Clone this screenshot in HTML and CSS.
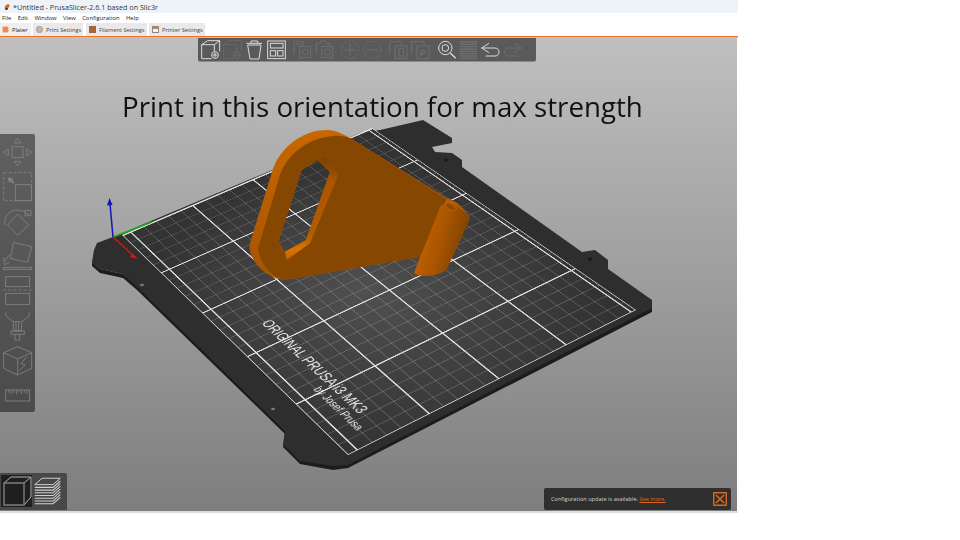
FILE: index.html
```html
<!DOCTYPE html>
<html lang="en">
<head>
<meta charset="utf-8">
<title>PrusaSlicer</title>
<link rel="stylesheet" href="styles.css">
</head>
<body>
<div class="window">
  <header class="titlebar">
    <svg class="app-icon" viewBox="0 0 8 8"><path d="M2 7 C1 5 2 2 5 1 C7 1 7 4 5 5 L4 7 Z" fill="#e0661c"/><path d="M3 7 L3 5 L5 5 L4 7 Z" fill="#222"/></svg>
    <span>*Untitled - PrusaSlicer-2.6.1 based on Slic3r</span>
  </header>
  <nav class="menubar">
    <span>File</span><span>Edit</span><span>Window</span><span>View</span><span>Configuration</span><span>Help</span>
  </nav>
  <div class="tabs">
    <div class="tab tab-active"><i class="tab-ico ico-plater"></i>Plater</div>
    <div class="tab"><i class="tab-ico ico-print"></i>Print Settings</div>
    <div class="tab"><i class="tab-ico ico-filament"></i>Filament Settings</div>
    <div class="tab"><i class="tab-ico ico-printer"></i>Printer Settings</div>
  </div>
  <div class="accent-line"></div>
  <main class="viewport">
    <div class="scene">
      <svg class="plate-body" viewBox="0 0 737 549">
        <path class="plate-side" d="M92 262 L92 266 L100 273 L123 278 L137 290 L285 434 L283 447 L300 464 L333 470 L348 468 L652 312 L652 305 L348 462 L300 458 L285 430 L137 286 L123 274 L100 269 Z"/>
        <path class="plate-top" d="M113 237 L97 243 L94 250 L92 262 L100 269 L123 274 L137 287 L285 430 L283 444 L300 461 L333 466 L348 465 L652 308 L652 300 L608 269 L608 260 L595 250 L582 252 L462 167 L462 160 L452 153 L435 152 L432 147 L452 143 L452 138 L423 120 L380 130 L360 133 Z"/>
        <circle class="hole" cx="446" cy="160" r="1.6"/>
        <circle class="hole" cx="590" cy="259" r="1.8"/>
        <ellipse class="hole-light" cx="273" cy="409" rx="2" ry="1.3"/>
        <ellipse class="hole-light" cx="142" cy="285" rx="2" ry="1.3"/>
      </svg>
      <div class="plate">
        <span class="plate-name">ORIGINAL PRUSA i3 MK3</span>
        <span class="plate-sub">by Josef Prusa</span>
      </div>
      <svg class="axes" viewBox="0 0 737 549">
        <path class="axis-green" d="M113 237 L152 222"/>
        <path class="axis-red" d="M113 237 L135 257"/>
        <path class="head-red" d="M132 253 L138 259 L130 257 Z"/>
        <path class="axis-blue" d="M113 237 L110 204"/>
        <path class="head-blue" d="M109.500 198 L112.500 205 L107 205.500 Z"/>
      </svg>
      <svg class="part" viewBox="0 0 750 510">
        <defs>
          <linearGradient id="rimFill" x1="0" y1="0" x2="0" y2="1">
            <stop offset="0" stop-color="#c96700"/>
            <stop offset="1" stop-color="#a55400"/>
          </linearGradient>
          <linearGradient id="wallFill" x1="0" y1="0" x2="0" y2="1">
            <stop offset="0" stop-color="#7a4100"/>
            <stop offset=".25" stop-color="#ab5700"/>
            <stop offset=".75" stop-color="#b35b00"/>
            <stop offset=".9" stop-color="#d97400"/>
            <stop offset="1" stop-color="#bd6000"/>
          </linearGradient>
          <linearGradient id="cylFill" x1="0" y1="0" x2="1" y2=".35">
            <stop offset="0" stop-color="#a85400"/>
            <stop offset=".3" stop-color="#bd5f00"/>
            <stop offset=".6" stop-color="#a85400"/>
            <stop offset="1" stop-color="#7c4200"/>
          </linearGradient>
        </defs>
        <path class="part-rim" fill-rule="evenodd" d="M58 375 L128 150 C150 85 215 30 290 30 C320 30 345 45 370 60 L650 235 C680 240 705 270 720 295 L650 447 C635 465 575 475 552 460 L570 410 L165 480 C110 475 60 430 58 375 Z M215 150 L262 120 L300 155 L228 360 L165 395 L145 365 Z"/>
        <path class="part-face" fill-rule="evenodd" d="M84 385 L150 165 C172 100 240 52 310 48 C330 46 350 50 370 60 L650 238 L570 410 L165 480 C125 474 88 430 84 385 Z M215 150 L262 120 L300 155 L228 360 L165 395 L145 365 Z"/>
        <path class="part-wall" d="M262 120 L285 112 L325 165 L240 370 L170 420 L165 395 L228 360 L300 155 Z"/>
        <path class="part-cyl" d="M630 262 C642 240 690 250 720 295 L650 447 C635 465 575 475 552 460 Z"/>
        <ellipse class="part-cap" cx="662" cy="260" rx="18" ry="9" transform="rotate(30 662 260)"/>
      </svg>
    </div>

    <h1 class="headline">Print in this orientation for max strength</h1>

    <div class="top-toolbar">
      <svg class="tool on" viewBox="18 28 57 57"><path d="M20 42 L38 30 L74 30 L74 62 M20 42 L58 42 L58 62 M58 42 L74 30 M20 42 L20 84 L50 84"/><circle cx="60" cy="73" r="10"/><path d="M60 66 V80 M53 73 H67"/></svg>
      <svg class="tool off" viewBox="85 28 57 57"><path class="dash" d="M87 42 L105 30 L140 30 L140 62 M87 42 L125 42 L125 62 M87 42 L87 84 L115 84"/><circle cx="127" cy="73" r="10"/><path d="M120 73 H134"/></svg>
      <svg class="tool on" viewBox="150 28 57 57"><path d="M154 38 H201 M168 38 V31 H188 V38 M158 43 L165 85 H192 L198 43 Z"/></svg>
      <svg class="tool on" viewBox="215 28 57 57"><rect x="217" y="31" width="53" height="53"/><rect x="225" y="38" width="38" height="14"/><rect x="225" y="60" width="16" height="16"/><rect x="247" y="60" width="16" height="16"/></svg>
      <svg class="tool off sep" viewBox="295 28 57 57"><path d="M298 70 V33 H325 V45 M303 40 H318"/><rect x="315" y="47" width="33" height="34"/><circle cx="332" cy="64" r="9"/></svg>
      <svg class="tool off" viewBox="360 28 57 57"><path d="M364 70 V38 H378 V31 H392 V38 H405 V45"/><rect x="380" y="47" width="33" height="34"/><circle cx="397" cy="64" r="9"/></svg>
      <svg class="tool off sep" viewBox="445 28 57 57"><circle class="dash" cx="472" cy="58" r="26"/><path d="M472 40 V76 M454 58 H490"/></svg>
      <svg class="tool off" viewBox="508 28 57 57"><circle class="dash" cx="536" cy="58" r="26"/><path d="M518 58 H554"/></svg>
      <svg class="tool off sep" viewBox="585 28 57 57"><path d="M587 70 V33 H624 V45"/><rect x="603" y="46" width="36" height="38"/><rect x="615" y="54" width="13" height="22"/></svg>
      <svg class="tool off" viewBox="650 28 57 57"><path d="M652 70 V33 H689 V45"/><rect x="668" y="46" width="36" height="38"/><text class="tool-letter" x="686" y="76">P</text></svg>
      <svg class="tool on sep" viewBox="730 28 57 57"><circle cx="755" cy="52" r="20"/><circle cx="755" cy="52" r="10"/><path class="thick" d="M770 67 L786 83"/></svg>
      <svg class="tool off" viewBox="812 28 57 57"><path class="thick" d="M814 34 H866 M814 41 H866 M814 48 H866 M814 55 H866 M814 62 H866 M814 69 H866 M814 76 H866 M814 83 H866"/></svg>
      <svg class="tool on" viewBox="892 28 57 57"><path d="M916 38 L894 52 L916 66 M894 52 H934 C950 52 950 76 934 76 H906"/></svg>
      <svg class="tool off" viewBox="960 28 57 57"><path d="M994 38 L1015 52 L994 66 M1015 52 H976 C960 52 960 76 976 76 H1005"/></svg>
    </div>

    <div class="left-toolbar">
      <svg class="gizmo" viewBox="3 21 90 90"><path d="M40 39 L50 25 L60 39 Z M22 57 L8 67 L22 77 Z M77 57 L92 67 L77 77 Z M40 94 L50 108 L60 94 Z"/><rect x="33" y="50" width="33" height="33"/></svg>
      <svg class="gizmo" viewBox="3 126 90 90"><rect class="dash-long" x="8" y="128" width="84" height="84"/><rect x="43" y="164" width="48" height="48"/><path class="fill" d="M19 141 L38 146 L33 150 L40 157 L36 161 L29 154 L25 159 Z"/></svg>
      <svg class="gizmo" viewBox="3 231 90 90"><path d="M12 285 C5 250 45 222 85 255 M72 240 L72 257 L90 257 L90 242 Z"/><path d="M50 252 L83 285 L50 316 L20 285 Z"/></svg>
      <svg class="gizmo" viewBox="3 336 90 90"><path d="M38 337 L92 350 L80 397 L28 385 Z M25 375 L12 393 M8 382 L11 404 L25 398"/><rect x="7" y="412" width="85" height="6"/></svg>
      <svg class="gizmo" viewBox="3 21 90 90"><rect x="14" y="20" width="72" height="30"/><path class="dash-long" d="M7 60 H92"/><rect x="14" y="70" width="72" height="33"/></svg>
      <svg class="gizmo" viewBox="3 121 90 90"><path d="M13 122 L16 135 L37 150 M86 122 L83 135 L62 150 M37 150 H62 V178 H37 Z M45 150 V178 M53 150 V178 M30 178 H70 V188 H30 Z M42 188 V205 H56 V188"/></svg>
      <svg class="gizmo" viewBox="3 226 90 90"><path d="M50 225 L92 243 L92 290 L50 310 L8 290 L8 243 Z M8 243 L50 262 L92 243 M50 262 V310 M78 255 L60 275 L72 280 L55 297"/></svg>
      <svg class="gizmo" viewBox="3 331 90 90"><rect x="14" y="355" width="72" height="33"/><path d="M22 355 V364 M30 355 V368 M38 355 V364 M46 355 V368 M54 355 V364 M62 355 V368 M70 355 V364 M78 355 V368"/></svg>
    </div>

    <div class="view-switch">
      <div class="view-btn view-active">
        <svg class="view-ico" viewBox="0 0 31 32"><path class="cube-back" d="M3 8 L10 2 L30 2 L30 22 L23 30 M23 8 L30 2"/><path class="cube-front" d="M3 8 H23 V30 H3 Z"/></svg>
      </div>
      <div class="view-btn">
        <svg class="view-ico" viewBox="0 0 34 32"><path class="stack-top" d="M2 9 L10 2 L30 2 L22 9 Z"/><path class="stack" d="M2 12 H22 L30 5 M2 15 H22 L30 8 M2 18 H22 L30 11 M2 21 H22 L30 14 M2 24 H22 L30 17 M2 27 H22 L30 20 M2 30 H22 L30 23"/></svg>
      </div>
    </div>

    <div class="notice">
      <span class="notice-text">Configuration update is available. <a class="notice-link">See more.</a></span>
      <svg class="notice-close" viewBox="0 0 14 14"><rect x=".6" y=".6" width="12.800" height="12.800" rx="1"/><path d="M3 3 L11 11 M11 3 L3 11"/></svg>
    </div>
  </main>
  <div class="bottom-line"></div>
</div>
</body>
</html>
```
FILE: styles.css
```css
* { box-sizing: border-box; }
html, body { margin: 0; padding: 0; background: #fff; }
body { font-family: "Open Sans", "Liberation Sans", sans-serif; color: #222; overflow: hidden; }

.window { width: 738px; height: 513px; display: flex; flex-direction: column; }

.titlebar { height: 13px; background: #eef3fa; display: flex; align-items: center; padding-left: 3px; gap: 2px; font-size: 7.200px; color: #333; }
.app-icon { width: 8px; height: 8px; }

.menubar { height: 10px; background: #fff; display: flex; align-items: center; padding-left: 2px; gap: 6.300px; font-size: 5.900px; color: #222; }

.tabs { height: 13px; display: flex; gap: 2px; background: #fff; }
.tab { width: 50px; height: 13px; background: #e9e9e9; display: flex; align-items: center; padding-left: 3px; gap: 3px; font-size: 5.700px; color: #444; white-space: nowrap; }
.tab:nth-child(3) { width: 61px; margin-left: 1px; }
.tab:nth-child(4) { width: 56px; }
.tab-active { width: 31px; background: #efefef; color: #222; padding-left: 2px; }
.tab-ico { width: 7px; height: 7px; display: block; flex: none; }
.ico-plater { background: #e98a55; border: 1px solid #f4c5a8; border-radius: 2px; }
.ico-print { background: #d8b49c; border: 1.500px solid #999; border-radius: 50%; }
.ico-filament { background: #b5622b; border: 1px solid #8f6a52; }
.ico-printer { background: linear-gradient(#e07a4a 40%, #f3f3f3 40%); border: 1px solid #888; }

.accent-line { height: 2px; width: 738px; flex: none; background: linear-gradient(#f07028 50%, #d9b9a6 50%); }

.viewport { position: relative; flex: none; width: 737px; height: 473px; overflow: hidden; background: linear-gradient(#bfbfbf, #7e7e7e); }

.scene { position: absolute; left: 0; top: -38px; width: 737px; height: 549px; }
.plate-body, .axes { position: absolute; left: 0; top: 0; width: 737px; height: 549px; }
.plate-top { fill: #2e2e2e; }
.plate-side { fill: #1c1c1c; }
.hole { fill: #161616; }
.hole-light { fill: #7a7a7a; }

.plate {
  position: absolute; left: 0; top: 0; width: 500px; height: 420px;
  transform-origin: 0 0;
  transform: matrix3d(0.30374,0.25470,0,-0.0003526, -0.61167,0.22314,0,-0.0001346, 0,0,1,0, 372,128,0,1);
  border: 1.500px solid #e4e4e4;
  background-color: #333;
  background-image:
    linear-gradient(to right, #dedede 1.800px, transparent 1.800px),
    linear-gradient(to bottom, #dedede 1.800px, transparent 1.800px),
    linear-gradient(to right, rgba(255,255,255,.22) 1.300px, transparent 1.300px),
    linear-gradient(to bottom, rgba(255,255,255,.22) 1.300px, transparent 1.300px),
    radial-gradient(ellipse 280px 260px at 58% 55%, #505050, #3c3c3c 70%, #333333);
  background-size: 100px 100%, 100% 100px, 20px 100%, 100% 20px, 100% 100%;
  background-position: 0 0, 0 5px, 0 0, 0 5px, 0 0;
  background-origin: padding-box;
}
.plate-name, .plate-sub { position: absolute; font-family: "Liberation Sans", sans-serif; color: #f2f2f2; white-space: nowrap; line-height: 1; transform-origin: 0 100%; transform: scaleY(1.25); }
.plate-name { left: 260px; top: 357px; font-size: 16.500px; }
.plate-sub { left: 392px; top: 379px; font-size: 12.500px; }

.axis-green { stroke: #1fb01f; stroke-width: 1.500; fill: none; }
.axis-red { stroke: #d01818; stroke-width: 1.500; fill: none; }
.axis-blue { stroke: #1414b0; stroke-width: 1.500; fill: none; }
.head-red { fill: #d01818; }
.head-blue { fill: #1414b0; }

.part { position: absolute; left: 230px; top: 120px; width: 250px; height: 170px; }
.part-rim { fill: url(#rimFill); }
.part-face { fill: #864700; }
.part-wall { fill: url(#wallFill); }
.part-cyl { fill: url(#cylFill); }
.part-cap { fill: #8f4c00; stroke: #bb5f00; stroke-width: 4; }

.headline { position: absolute; left: 122px; top: 49px; margin: 0; font-weight: 400; font-size: 27.700px; line-height: 38px; color: #111; white-space: nowrap; }

.top-toolbar { position: absolute; left: 198px; top: 0; width: 338px; height: 23px; background: #5a5a5a; border-radius: 0 0 2px 2px; box-shadow: 0 1px 0 #8c8c8c; display: flex; align-items: center; gap: 3px; padding-left: 3px; }
.tool { width: 19px; height: 19px; flex: none; fill: none; stroke-width: 3; overflow: visible; }
.tool.on { stroke: #dcdcdc; }
.tool.off { stroke: #6f6f6f; }
.sep { margin-left: 4px; }
.dash { stroke-dasharray: 5 3; }
.thick { stroke-width: 4; }
.tool-letter { font-family: "Liberation Sans", sans-serif; font-size: 26px; font-weight: 700; fill: #6f6f6f; stroke: none; text-anchor: middle; }

.left-toolbar { position: absolute; left: 0; top: 96px; width: 35px; height: 278px; background: linear-gradient(#606060, #4b4b4b); border-radius: 0 2px 2px 0; display: flex; flex-direction: column; gap: 5px; padding: 3px 0 0 2px; }
.gizmo { width: 30px; height: 30px; flex: none; fill: none; stroke: #848484; stroke-width: 2.500; overflow: visible; }
.gizmo .dash-long { stroke-dasharray: 9 6; }
.gizmo .fill { fill: #848484; stroke: none; }

.view-switch { position: absolute; left: 0; top: 435px; width: 67px; height: 37px; background: #484848; border-radius: 0 2px 0 0; display: flex; gap: 1px; padding: 2px 1px; }
.view-btn { width: 31px; height: 32px; }
.view-active { background: #1f1f1f; }
.view-ico { display: block; width: 100%; height: 100%; fill: none; }
.cube-back { stroke: #b5b5b5; stroke-width: 1; }
.cube-front { stroke: #7d7d7d; stroke-width: 1.400; }
.stack-top { stroke: #dcdcdc; stroke-width: 1; }
.stack { stroke: #cfcfcf; stroke-width: 1.200; }

.notice { position: absolute; left: 544px; top: 450px; width: 187px; height: 22px; background: #2f2f2f; border-radius: 2px; display: flex; align-items: center; justify-content: space-between; padding: 0 4px 0 7px; }
.notice-text { font-size: 5.600px; color: #d4d4d4; white-space: nowrap; }
.notice-link { color: #e0651c; text-decoration: underline; }
.notice-close { width: 14px; height: 14px; fill: none; stroke: #e0651c; stroke-width: 1.600; }

.bottom-line { height: 2px; margin-top: 0; background: #dedede; }
```
